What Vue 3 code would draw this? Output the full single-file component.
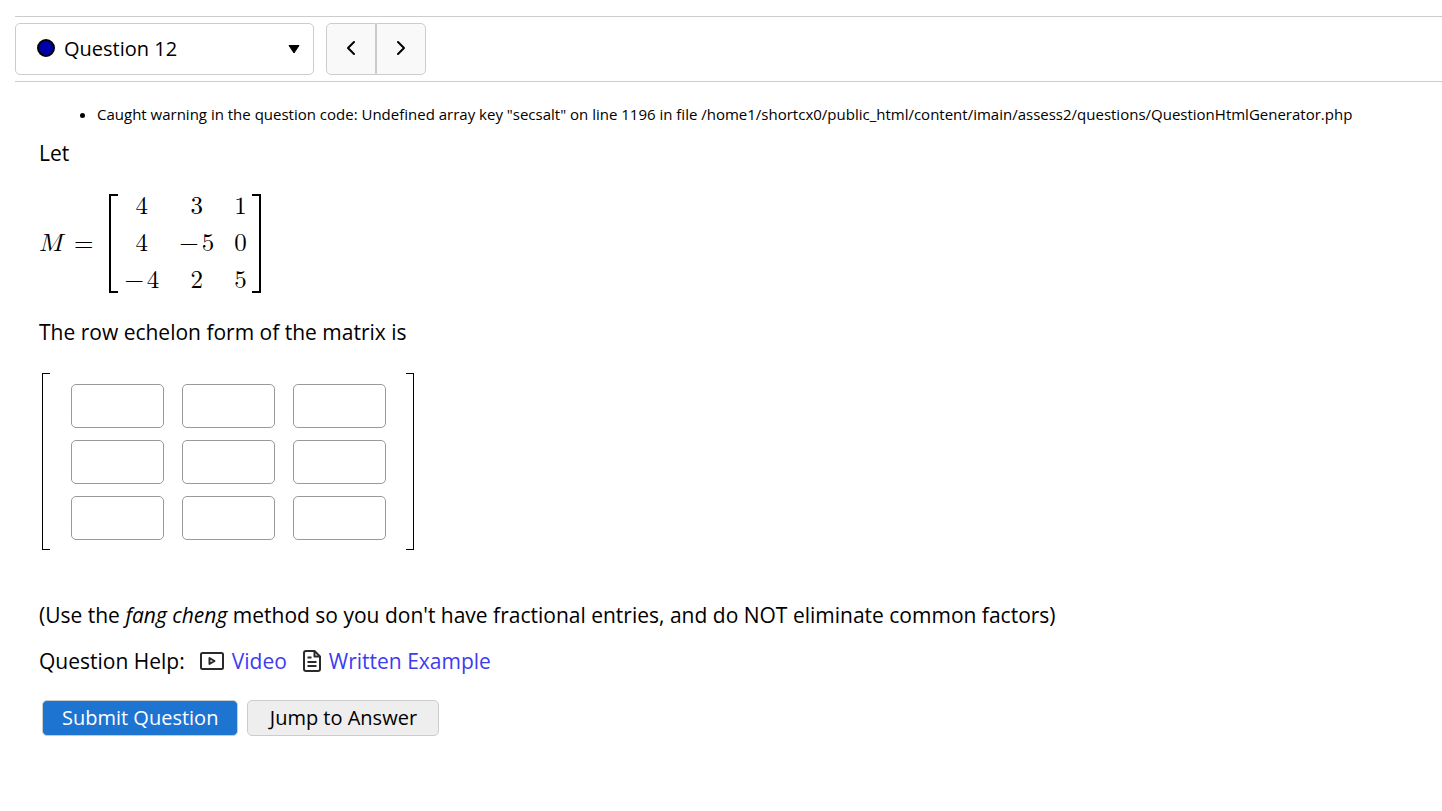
<script setup>
import { ref } from 'vue'

const current = ref('12')
const matrix = [
  ['4', '3', '1'],
  ['4', '−5', '0'],
  ['−4', '2', '5'],
]
const answers = ref([
  ['', '', ''],
  ['', '', ''],
  ['', '', ''],
])
</script>

<template>
  <div class="page">
    <header class="bar">
      <div class="picker">
        <svg class="dot" viewBox="0 0 18 18" aria-hidden="true">
          <circle cx="9" cy="8" r="8" fill="#0000a8" stroke="#000" stroke-width="2" />
        </svg>
        <select v-model="current" class="picker-select" aria-label="Question">
          <option value="12">Question 12</option>
        </select>
        <svg class="caret" viewBox="0 0 12 10" aria-hidden="true">
          <path d="M1 1.500h10L6 9z" stroke="#000" stroke-width="1" stroke-linejoin="round" />
        </svg>
      </div>
      <nav class="steps" aria-label="Question navigation">
        <button type="button" class="step" aria-label="Previous question">
          <svg viewBox="0 0 24 24" aria-hidden="true"><path d="M15 5l-6 6 6 6" /></svg>
        </button>
        <button type="button" class="step" aria-label="Next question">
          <svg viewBox="0 0 24 24" aria-hidden="true"><path d="M9 5l6 6-6 6" /></svg>
        </button>
      </nav>
    </header>

    <main class="question">
      <ul class="warnings">
        <li>Caught warning in the question code: Undefined array key "secsalt" on line 1196 in file /home1/shortcx0/public_html/content/imain/assess2/questions/QuestionHtmlGenerator.php</li>
      </ul>

      <p class="line">Let</p>

      <div class="equation">
        <i>M</i><span class="equals">=</span>
        <div class="matrix">
          <table>
            <tbody>
              <tr v-for="(row, r) in matrix" :key="r">
                <td v-for="(cell, c) in row" :key="c"><span v-if="cell[0] === '−'" class="minus">−</span>{{ cell.replace('−', '') }}</td>
              </tr>
            </tbody>
          </table>
        </div>
      </div>

      <p class="line">The row echelon form of the matrix is</p>

      <div class="answer">
        <template v-for="(row, r) in answers" :key="r">
          <input
            v-for="(cell, c) in row"
            :key="c"
            v-model="answers[r][c]"
            type="text"
            class="entry"
            :aria-label="`Row ${r + 1}, column ${c + 1}`"
          />
        </template>
      </div>

      <p class="line note">(Use the <em>fang cheng</em> method so you don't have fractional entries, and do NOT eliminate common factors)</p>

      <div class="help">
        <span class="help-label">Question Help:</span>
        <a href="#video" class="help-link">
          <svg class="video" viewBox="0 0 24 20" aria-hidden="true">
            <rect x="1" y="2" width="22" height="16" rx="1.500" />
            <path d="M9.500 7v6l5-3z" />
          </svg>
          Video
        </a>
        <a href="#example" class="help-link">
          <svg class="doc" viewBox="0 0 18 22" aria-hidden="true">
            <path d="M11.500 1H3a2 2 0 0 0-2 2v16a2 2 0 0 0 2 2h12a2 2 0 0 0 2-2V6.500z" />
            <path d="M11.500 1v5.500H17M4.500 7.500h4M4.500 12h9M4.500 16h9" />
          </svg>
          Written Example
        </a>
      </div>

      <div class="actions">
        <button type="button" class="btn primary">Submit Question</button>
        <button type="button" class="btn">Jump to Answer</button>
      </div>
    </main>
  </div>
</template>

<style>
body {
  margin: 0;
  background: #fff;
}
</style>

<style scoped>
.page {
  padding: 16px 0 0 15px;
  font-family: "Trebuchet MS", "Open Sans", sans-serif;
  font-size: 21px;
  line-height: 30px;
  color: #000;
}

.bar {
  display: flex;
  gap: 12px;
  padding: 6px 0;
  border-top: 1px solid #ccc;
  border-bottom: 1px solid #ccc;
}

.picker {
  box-sizing: border-box;
  display: flex;
  align-items: center;
  width: 299px;
  height: 52px;
  padding: 0 13px 0 21px;
  border: 1px solid #ccc;
  border-radius: 5px;
}

.dot {
  width: 18px;
  height: 18px;
  margin-right: 9px;
  overflow: visible;
}

.picker-select {
  flex: 1;
  height: 50px;
  padding: 0;
  border: 0;
  background: none;
  color: inherit;
  font: inherit;
  font-size: 20px;
  appearance: none;
}

.caret {
  width: 12px;
  height: 10px;
  pointer-events: none;
}

.steps {
  display: flex;
}

.step {
  box-sizing: border-box;
  display: flex;
  align-items: center;
  justify-content: center;
  width: 50px;
  height: 52px;
  padding: 0;
  border: 1px solid #ccc;
  background: #f9f9f9;
}

.step:first-child {
  border-radius: 5px 0 0 5px;
}

.step:last-child {
  border-radius: 0 5px 5px 0;
}

.step svg {
  width: 24px;
  height: 24px;
  fill: none;
  stroke: #000;
  stroke-width: 2;
  stroke-linecap: round;
  stroke-linejoin: round;
}

.question {
  padding: 20px 24px;
}

.warnings {
  margin: 0;
  padding-left: 58px;
  font-size: 15px;
  line-height: 24px;
}

.line {
  margin: 12px 0 0;
}

.equation {
  display: flex;
  align-items: center;
  margin: 26px 0 24px;
  font-family: "Latin Modern Math", "Liberation Serif", serif;
  font-size: 25px;
}

.equals {
  margin: 0 16px 0 12px;
}

.matrix,
.answer {
  position: relative;
}

.matrix::before,
.matrix::after,
.answer::before,
.answer::after {
  content: "";
  position: absolute;
  top: 0;
  bottom: 0;
  width: 7px;
  border: 2px solid #000;
}

.matrix::before,
.answer::before {
  left: 0;
  border-right: 0;
}

.matrix::after,
.answer::after {
  right: 0;
  border-left: 0;
}

.matrix {
  display: flex;
  align-items: center;
  height: 99px;
  padding: 0 14px 0 15px;
}

.matrix table {
  border-collapse: collapse;
}

.matrix td {
  height: 37px;
  padding: 0 0 0 20px;
  line-height: 30px;
  text-align: center;
}

.matrix td:first-child {
  padding-left: 0;
}

.minus {
  margin-right: 3px;
}

.answer {
  display: grid;
  grid-template-columns: repeat(3, 93px);
  gap: 12px 18px;
  width: max-content;
  margin: 26px 0 0 3px;
  padding: 11px 28px 10px 29px;
}

.answer::before,
.answer::after {
  border-width: 1px;
}

.entry {
  box-sizing: border-box;
  width: 93px;
  height: 44px;
  padding: 4px 8px;
  border: 1px solid #999;
  border-radius: 5px;
  font: inherit;
}

.note {
  margin-top: 50px;
}

.help {
  display: flex;
  align-items: center;
  margin-top: 16px;
}

.help-label {
  margin-right: 15px;
}

.help-link {
  display: flex;
  align-items: center;
  gap: 8px;
  margin-right: 16px;
  color: #3c3cf0;
  text-decoration: none;
}

.help-link svg {
  fill: none;
  stroke: #2a2a2a;
  stroke-width: 2;
  stroke-linejoin: round;
}

.video {
  width: 24px;
  height: 20px;
}

.doc {
  width: 18px;
  height: 22px;
}

.actions {
  display: flex;
  gap: 9px;
  margin: 24px 0 0 3px;
}

.btn {
  box-sizing: border-box;
  min-width: 192px;
  height: 36px;
  padding: 0 19px;
  border: 1px solid #ccc;
  border-radius: 5px;
  background: #eee;
  color: #000;
  font: inherit;
  font-size: 20px;
}

.primary {
  background: #1e74d1;
  color: #fff;
}
</style>
